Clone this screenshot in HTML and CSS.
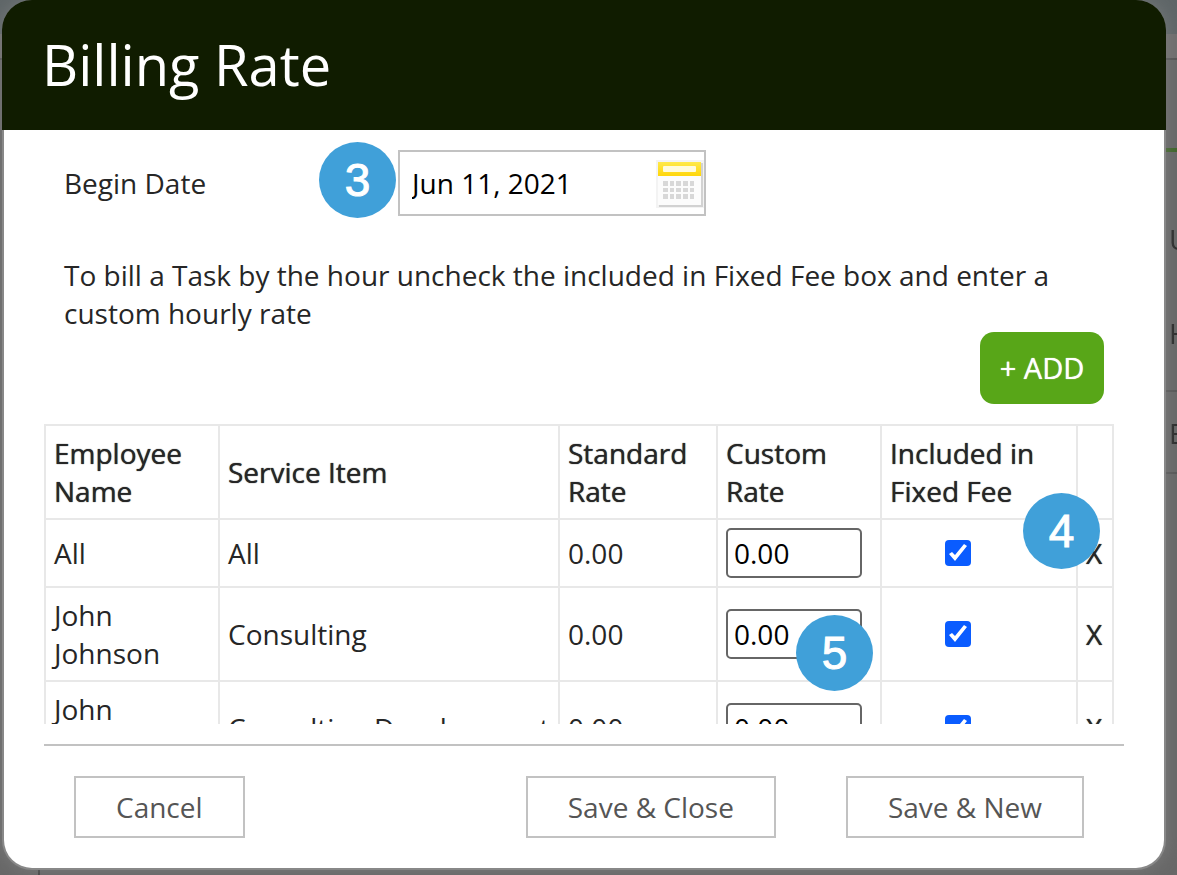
FILE: index.html
```html
<!DOCTYPE html>
<html lang="en">
<head>
<meta charset="utf-8">
<title>Billing Rate</title>
<link rel="stylesheet" href="styles.css">
</head>
<body>
<div class="backdrop" aria-hidden="true">
  <div class="backdrop-top"></div>
  <div class="backdrop-bar"></div>
  <div class="backdrop-tabs"></div>
  <div class="backdrop-row"><span class="backdrop-text">U</span></div>
  <div class="backdrop-row"><span class="backdrop-text">H</span></div>
  <div class="backdrop-row backdrop-row-marked"><span class="backdrop-text">E</span></div>
  <div class="backdrop-rest"></div>
</div>
<main class="dialog" role="dialog" aria-labelledby="dialog-title">
  <header class="dialog-header">
    <h1 class="dialog-title" id="dialog-title">Billing Rate</h1>
  </header>
  <form class="dialog-body">
    <div class="date-row">
      <label class="date-label" for="begin-date">Begin Date</label>
      <div class="date-field">
        <span class="step step-date">3</span>
        <input class="date-input" id="begin-date" type="text" value="Jun 11, 2021">
        <button class="date-button" type="button" aria-label="Open calendar">
          <svg viewBox="0 0 48 48" width="48" height="48">
            <defs>
              <linearGradient id="cal-head" x1="0" y1="0" x2="0" y2="1">
                <stop offset="0" stop-color="#ffe94a"/>
                <stop offset="1" stop-color="#ffd60a"/>
              </linearGradient>
            </defs>
            <rect width="48" height="48" fill="#f3f3f3"/>
            <path d="M45 3h2v44H3v-2h42z" fill="#d2d2d2"/>
            <rect x="2" y="2" width="43" height="43" fill="#fcfcfc"/>
            <rect x="2" y="2" width="43" height="14" fill="url(#cal-head)"/>
            <rect x="7" y="6" width="33" height="6" rx="1" fill="#fffbdc"/>
            <g fill="#d8d8d8">
              <path d="M7 21h5v5H7zM14 21h4v5h-4zM20 21h5v5h-5zM27 21h5v5h-5zM34 21h4v5h-4z"/>
              <path d="M7 28h5v4H7zM14 28h4v4h-4zM20 28h5v4h-5zM27 28h5v4h-5zM34 28h4v4h-4z"/>
              <path d="M7 34h5v5H7zM14 34h4v5h-4zM20 34h5v5h-5zM27 34h5v5h-5zM34 34h4v5h-4z"/>
            </g>
          </svg>
        </button>
      </div>
    </div>
    <p class="hint">To bill a Task by the hour uncheck the included in Fixed Fee box and enter a custom hourly rate</p>
    <div class="toolbar">
      <button class="add-button" type="button">+ ADD</button>
    </div>
    <div class="table-scroll">
      <table class="rates">
        <colgroup>
          <col class="col-name"><col><col class="col-standard"><col class="col-custom"><col class="col-fixed"><col class="col-remove">
        </colgroup>
        <thead>
          <tr>
            <th scope="col">Employee Name</th>
            <th scope="col">Service Item</th>
            <th scope="col">Standard Rate</th>
            <th scope="col">Custom Rate</th>
            <th scope="col">Included in Fixed Fee</th>
            <td></td>
          </tr>
        </thead>
        <tbody>
          <tr>
            <td>All</td>
            <td>All</td>
            <td>0.00</td>
            <td><input class="rate-input" type="text" value="0.00" aria-label="Custom rate, All"></td>
            <td class="cell-check"><input class="check" type="checkbox" checked aria-label="Included in fixed fee, All"></td>
            <td class="cell-remove"><button class="remove" type="button">X</button><span class="step step-fixed">4</span></td>
          </tr>
          <tr>
            <td>John Johnson</td>
            <td>Consulting</td>
            <td>0.00</td>
            <td class="cell-custom"><input class="rate-input" type="text" value="0.00" aria-label="Custom rate, Consulting"><span class="step step-custom">5</span></td>
            <td class="cell-check"><input class="check" type="checkbox" checked aria-label="Included in fixed fee, Consulting"></td>
            <td class="cell-remove"><button class="remove" type="button">X</button></td>
          </tr>
          <tr>
            <td>John Johnson</td>
            <td class="cell-service">Consulting Development</td>
            <td>0.00</td>
            <td><input class="rate-input" type="text" value="0.00" aria-label="Custom rate, Consulting Development"></td>
            <td class="cell-check"><input class="check" type="checkbox" checked aria-label="Included in fixed fee, Consulting Development"></td>
            <td class="cell-remove"><button class="remove" type="button">X</button></td>
          </tr>
        </tbody>
      </table>
    </div>
    <footer class="actions">
      <button class="action action-cancel" type="button">Cancel</button>
      <button class="action" type="submit">Save &amp; Close</button>
      <button class="action" type="submit">Save &amp; New</button>
    </footer>
  </form>
</main>
</body>
</html>
```
FILE: styles.css
```css
* {
  box-sizing: border-box;
}

body {
  margin: 0;
  padding: 0 11px 5px 2px;
  background: #6c6c6c;
  color: #262626;
  font: 28px/38px "Open Sans", "Noto Sans", sans-serif;
  overflow: hidden;
}

button,
input {
  font: inherit;
  color: inherit;
}

/* Dimmed page behind the dialog */
.backdrop {
  position: fixed;
  inset: 0;
  z-index: -1;
  display: flex;
  flex-direction: column;
  background: #686868;
}

.backdrop-top {
  height: 34px;
  background: #5f6668;
}

.backdrop-bar {
  height: 26px;
  background: #706f6f;
  border-bottom: 2px solid #555;
}

.backdrop-tabs {
  height: 92px;
  margin: 0 0 40px 50%;
  border-bottom: 4px solid #40662a;
}

.backdrop-row {
  display: flex;
  justify-content: flex-end;
  height: 94px;
  margin-left: 50%;
  padding-top: 28px;
  color: #2c2c2c;
}

.backdrop-text {
  width: 8px;
}

.backdrop-row-marked {
  height: 84px;
  margin-top: 10px;
  padding-top: 22px;
  border-top: 2px solid #585858;
  border-bottom: 2px solid #585858;
}

.backdrop-rest {
  flex: 1;
  margin-left: 38px;
  border-left: 2px solid #444;
}

/* Dialog */
.dialog {
  padding-bottom: 2px;
  border-radius: 30px;
  background: #888;
  box-shadow: 0 0 16px rgba(140, 140, 140, 0.5);
}

.dialog-header {
  padding: 26px 40px 28px;
  background: #101c00;
  border-radius: 30px 30px 0 0;
}

.dialog-title {
  margin: 0;
  color: #fff;
  font-size: 56px;
  line-height: 76px;
  font-weight: 400;
}

.dialog-body {
  margin: 0 2px;
  padding: 20px 40px 30px;
  background: #fff;
  border-radius: 0 0 28px 28px;
}

.date-row {
  display: flex;
  align-items: center;
  padding-left: 20px;
}

.date-label {
  width: 334px;
}

.date-field {
  position: relative;
  display: flex;
  align-items: center;
  width: 308px;
  height: 66px;
  border: 2px solid #c2c2c2;
}

.date-input {
  flex: 1;
  min-width: 0;
  padding: 0 12px;
  border: 0;
  outline: 0;
  background: none;
  color: #000;
}

.date-button {
  display: flex;
  padding: 2px 0 0;
  border: 0;
  background: none;
}

.hint {
  margin: 40px 20px 0;
}

.toolbar {
  display: flex;
  justify-content: flex-end;
  margin-bottom: 20px;
  padding-right: 20px;
}

.add-button {
  height: 72px;
  width: 124px;
  padding: 0;
  border: 0;
  border-radius: 14px;
  background: #58a618;
  color: #fff;
  font-size: 29px;
  text-shadow: 0 0 1px #fff;
}

/* Rates table */
.table-scroll {
  max-height: 300px;
  padding-right: 10px;
  overflow-y: auto;
  scrollbar-width: none;
}

.rates {
  width: 100%;
  table-layout: fixed;
  border-collapse: collapse;
}

.rates th,
.rates td {
  padding: 8px;
  border: 2px solid #e8e8e8;
  text-align: left;
  vertical-align: middle;
}

.rates th {
  font-weight: 400;
  text-shadow: 0 0 1px #262626;
}

.col-name {
  width: 174px;
}

.col-standard {
  width: 158px;
}

.col-custom {
  width: 164px;
}

.col-fixed {
  width: 196px;
}

.col-remove {
  width: 36px;
}

.cell-custom,
.cell-remove {
  position: relative;
}

.cell-service {
  white-space: nowrap;
}

.rate-input {
  display: block;
  width: 136px;
  height: 50px;
  padding: 0 6px;
  border: 2px solid #666;
  border-radius: 5px;
  background: #fff;
  color: #000;
}

.rates .cell-check {
  padding-left: 63px;
}

.check {
  appearance: none;
  display: block;
  width: 26px;
  height: 26px;
  margin: 0;
  border-radius: 4px;
  background: #0a5cff;
}

.check::after {
  content: "";
  display: block;
  width: 26px;
  height: 26px;
  background: #fff;
  clip-path: polygon(4px 14px, 7px 12px, 10px 15px, 19px 4px, 22px 6px, 10px 21px);
}

.remove {
  display: block;
  padding: 0;
  border: 0;
  background: none;
  text-shadow: 0 0 1px #262626;
}

/* Numbered callouts */
.step {
  position: absolute;
  width: 77px;
  height: 76px;
  border-radius: 50%;
  background: #40a0d9;
  color: #fff;
  font: 46px/76px "Liberation Sans", Arial, sans-serif;
  -webkit-text-stroke: 1px #fff;
  text-align: center;
}

.step-date {
  left: -81px;
  top: -10px;
}

.step-fixed {
  right: 12px;
  top: -27px;
}

.step-custom {
  right: 7px;
  bottom: -11px;
}

/* Footer */
.actions {
  display: flex;
  gap: 70px;
  margin-top: 20px;
  padding: 30px 40px 0 30px;
  border-top: 2px solid #c2c2c2;
}

.action {
  height: 62px;
  padding: 0 40px;
  border: 2px solid #c2c2c2;
  background: #fff;
  color: #555;
}

.action-cancel {
  margin-right: auto;
}
```
